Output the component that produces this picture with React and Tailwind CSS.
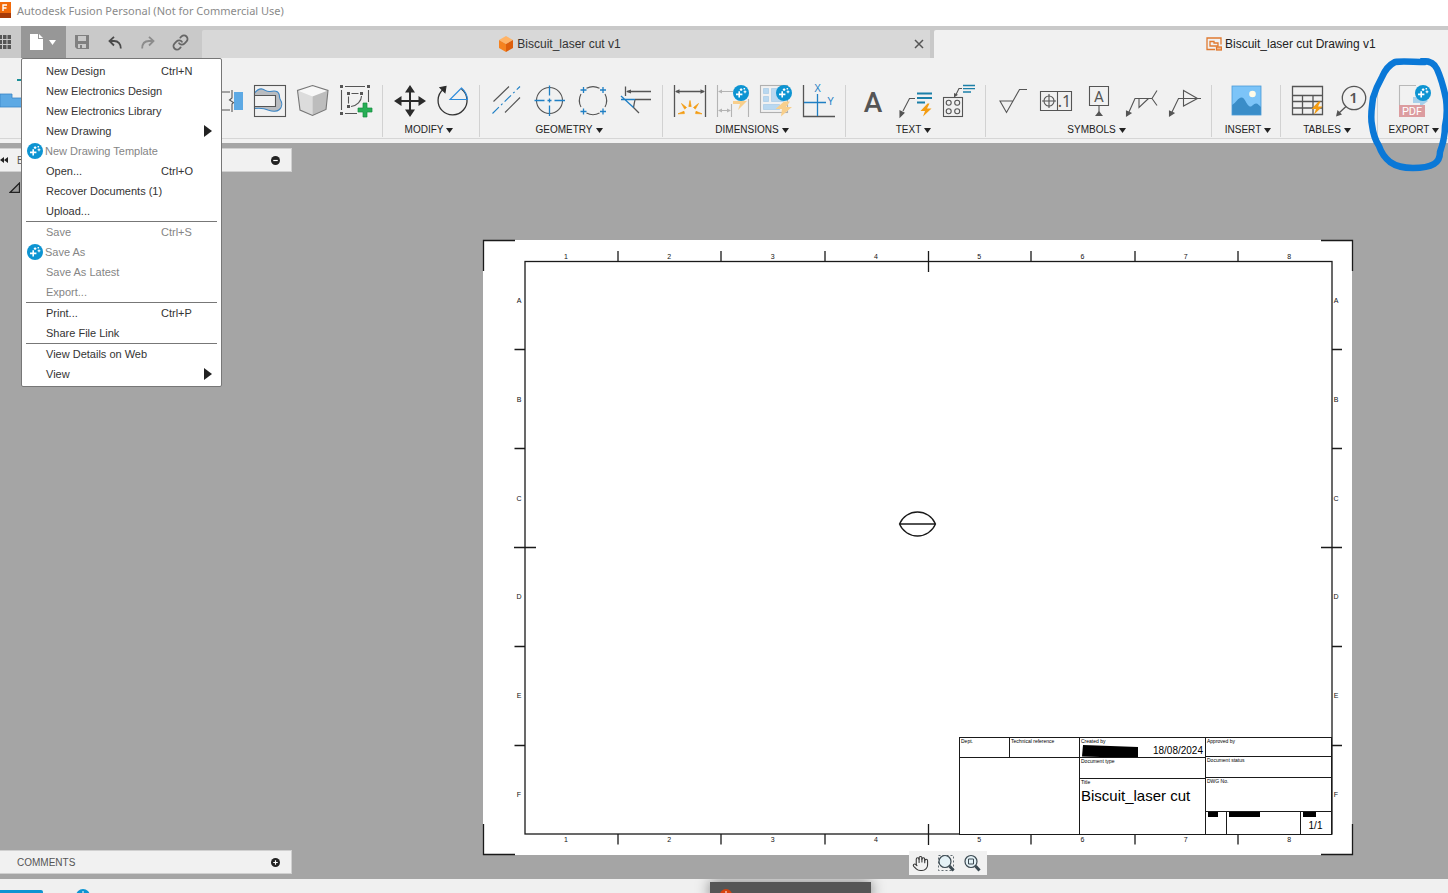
import React from 'react';
import { Hand, Link as LinkIcon } from 'lucide-react';

const INK = '#555';
const BLUE = '#1f7fc4';

function Icon({ children, className = 'size-8' }) {
  return (
    <svg viewBox="0 0 32 32" className={`block shrink-0 overflow-visible ${className}`} fill="none" stroke={INK} strokeWidth="1.1" aria-hidden="true">
      {children}
    </svg>
  );
}

function Badge({ x, y }) {
  return (
    <g transform={`translate(${x} ${y})`} stroke="#fff">
      <circle r="8" fill="#0d94d2" stroke="none" />
      <path d="M-1.8 -1.8v6.4M-5 1.4h6.4" strokeWidth="1.6" />
      <path d="M-1.2 -3.4h2.600M.1 -4.700v2.600M2.600 -1.200h2.800M4 -2.600v2.800M2.500 -4.200h1.600M3.300 -5v1.600" strokeWidth="1.1" />
    </g>
  );
}

function Bolt({ x, y, pale }) {
  return (
    <path
      transform={`translate(${x} ${y})`}
      d="M1.5 -6.5L-5.5 1h4.5L-3 6.5L5.5 -1.6H1L3.5 -6.5Z"
      fill={pale ? '#f8cf8c' : '#f39c12'}
      stroke="none"
    />
  );
}

const icons = {
  breakView: (
    <Icon>
      <path d="M0 7h19M0 25h19" />
      <rect x="23" y="7" width="9" height="18" fill="#5da9e4" stroke="none" />
      <path d="M21 5v8l-2.5 2l4 2.5l-1.5 1.5v8M4 14l5 2l-5 2" />
    </Icon>
  ),
  crop: (
    <Icon>
      <path d="M.5 8C3 5 6 3 9 4.200C12 5.500 13 7 16 6.500C20 5.500 24 6 25 9C26 12 25 13 26.500 15C28.500 18 28 22 25.500 24.500C22 27.500 18 26.500 14 25C10 23 6 23 .5 23.500Z" fill="#b9bcc0" stroke="#3b86c6" />
      <path d="M.5 10.500H21.500V21.500H.5" fill="#f3f3f3" />
      <rect x=".5" y=".5" width="31" height="31" />
    </Icon>
  ),
  cube: (
    <Icon>
      <path d="M15.500 .5L31 5.500L15.500 11.500L.5 5.500Z" fill="#f7f7f7" stroke="none" />
      <path d="M.5 5.500L15.500 11.500V30.500L3 25Z" fill="#dcdcdc" stroke="none" />
      <path d="M31 5.500L15.500 11.500V30.500L29 24.500Z" fill="#bdbdbd" stroke="none" />
      <path d="M15.500 .5L31 5.500L29 24.500L15.500 30.500L3 25L.5 5.500Z" stroke="#777" />
    </Icon>
  ),
  sketch: (
    <Icon>
      <path d="M5 1.500H25M28.500 5V17M1.500 5V25M5 28.500H17" />
      <path d="M11.500 8.500H18.500M8.500 11.500V18.500" />
      <path d="M21.500 11C21.500 16 17 21 11 21.500" />
      <path d="M0 0h3v3h-3zM27 0h3v3h-3zM0 27h3v3h-3zM7 7h3v3h-3zM20 7h3v3h-3zM7 20h3v3h-3z" fill={INK} stroke="none" />
      <path d="M23 18h4v5h5v4h-5v5h-4v-5h-5v-4h5z" fill="#27ae55" stroke="#168c40" strokeWidth=".7" />
    </Icon>
  ),
  move: (
    <Icon>
      <path d="M16 4v24M4 16h24" stroke="#2b2b2b" strokeWidth="2" />
      <path d="M16 0l5 7.500H11zM16 32l5 -7.500H11zM0 16l7.500 -5v10zM32 16l-7.500 -5v10z" fill="#2b2b2b" stroke="none" />
    </Icon>
  ),
  rotate: (
    <Icon>
      <path d="M6 4.500A14.500 14.500 0 1 0 24.500 4" stroke="#333" strokeWidth="1.300" />
      <path d="M9 1.500L8 7.500L3 2.500Z" fill="#2b2b2b" stroke="#2b2b2b" />
      <path d="M24.500 3L13 14.500H30.500C30 10 28 6 24.500 3Z" stroke="#2d8bdb" />
    </Icon>
  ),
  centerline: (
    <Icon>
      <path d="M2.500 16.500L18 1.500M14 27.500L29 12.500" />
      <path d="M1.500 28.500L29 1.500" stroke={BLUE} strokeDasharray="9 3 2 3" />
    </Icon>
  ),
  centerMark: (
    <Icon>
      <circle cx="15.500" cy="15.500" r="13" />
      <path d="M.5 15.500h10M20.500 15.500h10.500M15.500 .5v10M15.500 20.500v10.500M13.500 15.500h4M15.500 13.500v4" stroke={BLUE} strokeWidth="1.300" />
    </Icon>
  ),
  markPattern: (
    <Icon>
      <path d="M9.500 3.300A14 14 0 0 1 22.500 3.300M28 9A14 14 0 0 1 28 22M22.500 28A14 14 0 0 1 9.500 28M4 22A14 14 0 0 1 4 9" />
      <path d="M3.500 5h6M6.500 2v6M23 5h6M26 2v6M3.500 26.500h6M6.500 23.500v6M23 26.500h6M26 23.500v6" stroke={BLUE} strokeWidth="1.300" />
    </Icon>
  ),
  edgeExtension: (
    <Icon>
      <path d="M5.500 1.500v9.500M7 6.500h24M15 14.500h16M15 14.500l-1.500 8l5.500 5.500" strokeWidth="1.300" />
      <path d="M6 6.500l5 -2v4z" fill={INK} stroke="none" />
      <path d="M1 14.500h14M1 11l12.500 11.500" stroke={BLUE} strokeWidth="1.300" />
    </Icon>
  ),
  dimension: (
    <Icon>
      <path d="M.5 0v32M31.500 0v32M2 6.500h28" strokeWidth="1.300" />
      <path d="M1 6.500l4.500 -2.200v4.400zM31 6.500l-4.500 -2.200v4.400z" fill={INK} stroke="none" />
      <path d="M16 15.500l1.200 6h-2.400zM7.500 18.500l5 4l-1.800 1.600zM24.500 18.500l-5 4l1.800 1.600zM4 28.800l6 -2.500l.4 2.300zM28 28.800l-6 -2.500l-.4 2.300z" fill="#f39c12" stroke="#f39c12" strokeWidth=".7" />
    </Icon>
  ),
  autoDimension: (
    <Icon>
      <g stroke="#b4b4b4">
        <path d="M.5 0v32M14.500 19v13M31.500 14v18M2 6.500h14M2 25.500h11" />
        <path d="M1 6.500l4 -2v4zM1 25.500l4 -2v4zM14 25.500l-4 -2v4z" fill="#b4b4b4" stroke="none" />
      </g>
      <path d="M16 16h14L21 25l2 -6H16z" fill="#f8cf8c" stroke="none" />
      <Badge x={24} y={8} />
    </Icon>
  ),
  autoLayout: (
    <Icon>
      <rect x=".5" y=".5" width="27" height="27" stroke="#b0b0b0" />
      <path d="M3.500 3.500h5v5h-5zM3.500 11.500h5v5h-5zM11.500 3.500h12v13h-12zM3.500 19.500h16v5h-16z" fill="#b9d8f0" stroke="#9fc6e4" strokeWidth=".6" />
      <path d="M24 16.500L15.500 24h6.500L21 31.500L32 22h-6l4 -5.500z" fill="#f8cf8c" stroke="none" />
      <Badge x={24} y={8} />
    </Icon>
  ),
  ordinate: (
    <Icon>
      <path d="M.5 0v31.500H32" strokeWidth="1.300" />
      <path d="M14.500 9v22M1 17.500h22" stroke={BLUE} strokeWidth="1.300" />
      <text x="14.500" y="7" textAnchor="middle" className="font-['Liberation_Sans'] text-[10px]" fill={BLUE} stroke="none">X</text>
      <text x="27.500" y="20" textAnchor="middle" className="font-['Liberation_Sans'] text-[10px]" fill={BLUE} stroke="none">Y</text>
    </Icon>
  ),
  text: (
    <Icon>
      <text x="16" y="27" textAnchor="middle" className="font-['Roboto'] text-[28px] font-medium" fill={INK} stroke="none">A</text>
    </Icon>
  ),
  leaderText: (
    <Icon>
      <path d="M3 26L9.500 13.500H15" />
      <path d="M0 32V26l4 2z" fill={INK} stroke={INK} />
      <path d="M17 8.500h15M17 13h15M17 17.500h8" stroke="#1b7fa8" strokeWidth="1.800" />
      <Bolt x={26} y={25} />
    </Icon>
  ),
  holeNote: (
    <Icon>
      <rect x=".5" y="12.500" width="19" height="19" />
      <circle cx="5.700" cy="17.700" r="2.500" />
      <circle cx="14.200" cy="17.700" r="2.500" />
      <circle cx="5.700" cy="26.200" r="2.500" />
      <circle cx="14.200" cy="26.200" r="2.500" />
      <path d="M12.500 10.500L16 3.500h3" />
      <path d="M11 12.500V8l4 1.800z" fill={INK} stroke="none" />
      <path d="M20 .5h12M20 3.700h12M20 7h8" stroke="#1b7fa8" strokeWidth="1.300" />
    </Icon>
  ),
  surface: (
    <Icon>
      <path d="M15.500 16H3L9.500 27.500L22.500 4.500H30" />
    </Icon>
  ),
  tolerance: (
    <Icon>
      <path d="M.5 6.500h31v19H.5zM17.500 6.500v19M2 16h14M9 9v14" />
      <circle cx="9" cy="16" r="5" />
      <text x="24.500" y="22" textAnchor="middle" className="font-['Noto_Sans'] text-[16px]" fill={INK} stroke="none">.1</text>
    </Icon>
  ),
  datum: (
    <Icon>
      <path d="M6.500 1.500h19v19h-19zM16 20.500v8" />
      <path d="M16 26l4 5h-8z" fill={INK} stroke="none" />
      <text x="16" y="17" textAnchor="middle" className="font-['Roboto'] text-[15px]" fill={INK} stroke="none">A</text>
    </Icon>
  ),
  weld: (
    <Icon>
      <path d="M3 27L9 13.500H26L31 5.500M26 13.500L31 20.500M13 13.500V22.500L22.500 13.500" />
      <path d="M.5 31V26l4.500 2z" fill={INK} stroke={INK} />
    </Icon>
  ),
  taper: (
    <Icon>
      <path d="M3 27L9.500 13.500H32M14.500 5.500V21L28.500 13.500Z" />
      <path d="M.5 31V26l4.500 2z" fill={INK} stroke={INK} />
    </Icon>
  ),
  image: (
    <Icon>
      <rect x="2" y="1" width="29" height="29" fill="#7cc4f8" stroke="none" />
      <path d="M2 20C6 18 8 12.500 11.500 12.500C15 12.500 16 19 19 21C22 23 23 18.500 26 18.500C28 18.500 29 20.500 31 22V30H2Z" fill="#3a8dc8" stroke="none" />
      <circle cx="22.500" cy="9" r="3.300" fill="#fffbe8" stroke="none" />
      <rect x="2" y="1" width="29" height="29" stroke="#4a9bd8" strokeWidth=".8" />
    </Icon>
  ),
  table: (
    <Icon>
      <path d="M.5 1.500h30v28H.5zM.5 10.500h30M.5 16.500h30M.5 23h30M10.500 10.500v19M21 10.500v19" strokeWidth="1.300" />
      <Bolt x={25} y={23} />
    </Icon>
  ),
  balloon: (
    <Icon>
      <circle cx="19" cy="13" r="11.700" strokeWidth="1.300" />
      <path d="M11 21.500L4 28" strokeWidth="1.300" />
      <path d="M1 31.500L2.500 25l4.500 4.500z" fill={INK} stroke="none" />
      <text x="18.500" y="18" textAnchor="middle" className="font-['Noto_Sans'] text-[15px] font-semibold" fill={INK} stroke="none">1</text>
    </Icon>
  ),
  pdf: (
    <Icon>
      <path d="M3.500 20V.5H20" stroke="#b8b8b8" />
      <path d="M17 12h7v-4l8 8l-8 6v-4h-7z" fill="#a8d0ea" stroke="none" />
      <rect x="3" y="20" width="26" height="12" fill="#dc9c9f" stroke="none" />
      <text x="16" y="30" textAnchor="middle" className="font-['Roboto'] text-[11px]" fill="#fff" stroke="none">PDF</text>
      <Badge x={27} y={8} />
    </Icon>
  ),
};

const groups = [
  { label: 'MODIFY', tools: ['move', 'rotate'] },
  { label: 'GEOMETRY', tools: ['centerline', 'centerMark', 'markPattern', 'edgeExtension'] },
  { label: 'DIMENSIONS', tools: ['dimension', 'autoDimension', 'autoLayout', 'ordinate'] },
  { label: 'TEXT', tools: ['text', 'leaderText', 'holeNote'] },
  { label: 'SYMBOLS', tools: ['surface', 'tolerance', 'datum', 'weld', 'taper'] },
  { label: 'INSERT', tools: ['image'] },
  { label: 'TABLES', tools: ['table', 'balloon'] },
  { label: 'EXPORT', tools: ['pdf'], marked: true },
];

function Tool({ name }) {
  return (
    <button type="button" aria-label={name} className="flex w-[43px] shrink-0 justify-center">
      {icons[name]}
    </button>
  );
}

function Caret() {
  return (
    <svg viewBox="0 0 7 5" className="h-[5px] w-[7px]" aria-hidden="true">
      <path d="M0 0h7L3.500 5z" fill="#222" />
    </svg>
  );
}

function HandDrawnRing() {
  return (
    <svg viewBox="1367 54 86 120" className="pointer-events-none absolute -top-[30px] -left-[11px] h-[120px] w-[86px]" fill="none" stroke="#0a78d7" strokeWidth="6.500" strokeLinecap="round" strokeLinejoin="round" aria-hidden="true">
      <path d="M1423 59L1425 61C1414 61 1402 60 1395 61C1389 64 1385 69 1382 76C1378 83 1375 90 1373 97C1372 106 1370 115 1372 124C1373 132 1375 139 1379 145C1381 151 1385 157 1390 161C1397 166 1405 167 1413 167C1421 167 1429 166 1434 163C1439 160 1440 156 1440 151C1443 143 1445 133 1445 125C1447 117 1447 106 1446 98C1444 88 1441 77 1437 68C1434 61 1428 60 1423 60" />
    </svg>
  );
}

function Group({ label, tools, marked }) {
  return (
    <section className="relative flex h-[52px] min-w-[69px] shrink-0 flex-col items-center gap-[5px] border-l border-[#d2d2d2] px-[5px]">
      <div className="flex">
        {tools.map((t) => <Tool key={t} name={t} />)}
      </div>
      <button type="button" className={`flex items-center gap-[3px] whitespace-nowrap font-['Liberation_Sans',sans-serif] text-[10px] leading-4 text-[#222] ${tools.length > 1 ? 'pr-1' : 'pl-1'}`}>
        {label}
        <Caret />
      </button>
      {marked && <HandDrawnRing />}
    </section>
  );
}

const menu = [
  [
    { t: 'New Design', k: 'Ctrl+N' },
    { t: 'New Electronics Design' },
    { t: 'New Electronics Library' },
    { t: 'New Drawing', sub: true },
    { t: 'New Drawing Template', off: true, badge: true },
    { t: 'Open...', k: 'Ctrl+O' },
    { t: 'Recover Documents (1)' },
    { t: 'Upload...' },
  ],
  [
    { t: 'Save', k: 'Ctrl+S', off: true },
    { t: 'Save As', off: true, badge: true },
    { t: 'Save As Latest', off: true },
    { t: 'Export...', off: true },
  ],
  [{ t: 'Print...', k: 'Ctrl+P' }, { t: 'Share File Link' }],
  [{ t: 'View Details on Web' }, { t: 'View', sub: true }],
];

function FileMenu() {
  return (
    <div role="menu" className="absolute top-full left-0 z-30 w-[201px] rounded-xs border border-[#777] bg-white pt-[2px] pb-[2px] font-['Liberation_Sans',sans-serif] text-[11px]">
      {menu.map((section, i) => (
        <div key={i} className={i ? 'relative pt-px before:absolute before:inset-x-1 before:top-0 before:h-px before:bg-[#777]' : ''}>
          {section.map((m) => (
            <button key={m.t} type="button" role="menuitem" disabled={m.off} className={`flex h-5 w-full items-center pr-2 pl-1 text-left ${m.off ? 'text-[#858585]' : 'text-[#333]'}`}>
              <span className="flex w-[18px] shrink-0 justify-center">
                {m.badge && (
                  <svg viewBox="-8 -8 16 16" className="size-4 shrink-0" fill="none" aria-hidden="true"><Badge x={0} y={0} /></svg>
                )}
              </span>
              <span className={`grow whitespace-nowrap ${m.badge ? 'pl-px' : 'pl-[2px]'}`}>{m.t}</span>
              {m.k && <span className="w-[52px]">{m.k}</span>}
              {m.sub && (
                <svg viewBox="0 0 8 12" className="mr-px h-3 w-2" aria-hidden="true"><path d="M0 0l8 6l-8 6z" fill="#222" /></svg>
              )}
            </button>
          ))}
        </div>
      ))}
    </div>
  );
}

function TabBar() {
  return (
    <div className="relative z-20 flex h-8 items-stretch bg-[#c9c9c9]">
      <button type="button" aria-label="Show data panel" className="flex w-[21px] items-center">
        <svg viewBox="0 0 11 14" className="h-[14px] w-[11px]" fill="#555" aria-hidden="true">
          <path d="M-2 0h4v4h-4zM3 0h3.500v4H3zM7.500 0H11v4H7.500zM-2 5h4v4h-4zM3 5h3.500v4H3zM7.500 5H11v4H7.500zM-2 10h4v4h-4zM3 10h3.500v4H3zM7.500 10H11v4H7.500z" />
        </svg>
      </button>
      <div className="relative flex">
        <button type="button" aria-label="File" className="flex w-[45px] items-center gap-[6px] bg-[#979797] pl-[9px]">
          <svg viewBox="0 0 13 16" className="h-4 w-[13px]" fill="#fff" aria-hidden="true"><path d="M0 0h8v5h5v11H0zM9 0l4 4H9z" /></svg>
          <svg viewBox="0 0 7 5" className="h-[5px] w-[7px]" fill="#fff" aria-hidden="true"><path d="M0 0h7L3.500 5z" /></svg>
        </button>
        <FileMenu />
      </div>
      <div className="flex w-[136px] shrink-0 items-center">
        <button type="button" aria-label="Save" className="flex w-8 justify-center">
          <svg viewBox="0 0 14 14" className="size-[14px]" aria-hidden="true">
            <path fillRule="evenodd" d="M0 0h14v14H2L0 12zM3 1v5h8V1zM3 9v4h8V9z" fill="#808080" />
            <path d="M5 10h2v3H5z" fill="#808080" />
          </svg>
        </button>
        <button type="button" aria-label="Undo" className="flex w-[33px] justify-center">
          <svg viewBox="0 0 14 13" className="h-[13px] w-[14px]" fill="none" stroke="#4a4a4a" strokeWidth="1.800" aria-hidden="true"><path d="M6 .8L1.500 5L6 9.500M1.500 5H6C10.500 5 12.800 8 12.800 12.500" /></svg>
        </button>
        <button type="button" aria-label="Redo" className="flex w-[33px] justify-center">
          <svg viewBox="0 0 14 13" className="h-[13px] w-[14px]" fill="none" stroke="#8c8c8c" strokeWidth="1.800" aria-hidden="true"><path d="M8 .8L12.500 5L8 9.500M12.500 5H8C3.500 5 1.200 8 1.200 12.500" /></svg>
        </button>
        <button type="button" aria-label="Link" className="flex w-[33px] justify-center text-[#666]">
          <LinkIcon size={17} strokeWidth={2.5} />
        </button>
      </div>
      <div role="tablist" className="flex min-w-0 grow items-stretch pt-1 font-['Liberation_Sans',sans-serif] text-[12px] text-[#333]">
        <div className="flex w-[732px] shrink-0 items-center rounded-tl-xs border-r-4 border-[#c9c9c9] bg-[#d8d8d8] pr-[6px]">
          <button type="button" role="tab" className="flex grow items-center justify-center gap-1 pl-1">
            <svg viewBox="0 0 14 16" className="h-4 w-[14px]" aria-hidden="true">
              <path d="M7 0l7 4L7 8L0 4z" fill="#ffb366" />
              <path d="M0 4l7 4v8l-7 -4z" fill="#f5821f" />
              <path d="M14 4L7 8v8l7 -4z" fill="#dd5f0c" />
            </svg>
            Biscuit_laser cut v1
          </button>
          <button type="button" aria-label="Close tab" className="text-[#555]">
            <svg viewBox="0 0 10 10" className="size-[10px]" fill="none" stroke="currentColor" strokeWidth="1.500" aria-hidden="true"><path d="M1 1l8 8M9 1l-8 8" /></svg>
          </button>
        </div>
        <button type="button" role="tab" aria-selected="true" className="flex min-w-0 grow items-center gap-[3px] rounded-tl-xs bg-[#f1f1f1] pl-[272px] text-[#222]">
          <svg viewBox="0 0 16 14" className="h-[14px] w-4 shrink-0" fill="none" stroke="#e07a30" strokeWidth="1.300" aria-hidden="true">
            <path d="M15 7.500V1H1v11.500h8M4 4.500h4v1.500h4v3H4z" />
            <rect x="10.500" y="10" width="5" height="3" fill="#f3b98f" />
          </svg>
          <span className="whitespace-nowrap">Biscuit_laser cut Drawing v1</span>
        </button>
      </div>
    </div>
  );
}

const cols = [1, 2, 3, 4, 5, 6, 7, 8];
const rows = ['A', 'B', 'C', 'D', 'E', 'F'];
const colTicks = [135, 238, 342, 548, 652, 755];
const rowTicks = [109, 208, 406, 505];

function SheetFrame() {
  return (
    <svg viewBox="0 0 869 615" className="absolute inset-0 size-full overflow-visible" fill="none" stroke="#1a1a1a" strokeWidth="1.300" aria-hidden="true">
      <path d="M.5 31V.5H32M838 .5H869.500V31M.5 584V614.500H32M838 614.500H869.500V584" strokeWidth="1.300" />
      <rect x="42" y="21.500" width="807" height="572.500" />
      {colTicks.map((x) => <path key={x} d={`M${x} 11V21M${x} 594V604.500`} />)}
      {rowTicks.map((y) => <path key={y} d={`M31.500 ${y + 0.5}H42M849 ${y + 0.5}H859`} />)}
      <path d="M445.500 11V32M445.500 584V605M31 307.500H53M838 307.500H859" />
      <g className="font-['Liberation_Sans'] text-[7px]" fill="#111" stroke="none" textAnchor="middle">
        {cols.map((c, i) => (
          <React.Fragment key={c}>
            <text x={83 + i * 103.3} y="19">{c}</text>
            <text x={83 + i * 103.3} y="602">{c}</text>
          </React.Fragment>
        ))}
        {rows.map((r, i) => (
          <React.Fragment key={r}>
            <text x="36" y={63 + i * 98.8}>{r}</text>
            <text x="853" y={63 + i * 98.8}>{r}</text>
          </React.Fragment>
        ))}
      </g>
      <path d="M416.500 284A19.500 19.500 0 0 1 452.500 284A19.500 19.500 0 0 1 416.500 284ZM416.500 284H452.500" strokeWidth="1.300" />
    </svg>
  );
}

function Field({ label, className = '', children }) {
  return (
    <div className={`border-t border-l border-[#1a1a1a] pl-px text-[5px] leading-[6px] ${className}`}>
      <div className="whitespace-nowrap">{label}</div>
      {children}
    </div>
  );
}

function TitleBlock() {
  return (
    <div className="relative flex h-[98px] w-[373px] border-r border-b border-[#1a1a1a] bg-white text-black">
      <div className="flex w-[120px] flex-col">
        <div className="flex h-5">
          <Field label="Dept." className="w-[50px]" />
          <Field label="Technical reference" className="grow" />
        </div>
        <Field className="grow" />
      </div>
      <div className="flex w-[126px] flex-col">
        <Field label="Created by" className="h-5">
          <div className="flex items-center justify-between pr-[2px] text-[10px] leading-[14px]">
            <svg viewBox="0 0 57 14" className="h-[14px] w-[57px]" aria-label="Redacted name"><path d="M2 1L57 3V14L1 12.500Z" /></svg>
            18/08/2024
          </div>
        </Field>
        <Field label="Document type" className="h-[21px]" />
        <Field label="Title" className="grow">
          <div className="pt-[2px] text-[15px] leading-[18px] whitespace-nowrap">Biscuit_laser cut</div>
        </Field>
      </div>
      <div className="flex grow flex-col">
        <Field label="Approved by" className="h-5" />
        <Field label="Document status" className="h-[21px]" />
        <Field label="DWG No." className="h-[35px]" />
        <div className="flex grow">
          <Field className="w-[21px]"><div className="ml-px h-[5px] w-[10px] bg-black" /></Field>
          <Field className="w-[74px]"><div className="ml-px h-[5px] w-[31px] bg-black" /></Field>
          <Field className="grow">
            <div className="ml-px h-[5px] w-[13px] bg-black" />
            <div className="pt-px pr-[2px] text-center text-[10px] leading-4">1/1</div>
          </Field>
        </div>
      </div>
    </div>
  );
}

function RoundSign({ plus }) {
  return (
    <svg viewBox="0 0 10 10" className="size-[9px]" aria-hidden="true">
      <circle cx="5" cy="5" r="5" fill="#222" />
      <path d={plus ? 'M2.500 5h5M5 2.500v5' : 'M2.500 5h5'} stroke="#fff" strokeWidth="1.300" />
    </svg>
  );
}

function Magnifier({ fit }) {
  return (
    <svg viewBox="0 0 18 18" className="size-[18px]" fill="none" stroke="#3c4a52" aria-hidden="true">
      {!fit && <path d="M1.500 1.500h15v15h-15z" strokeDasharray="2 2" strokeWidth=".8" />}
      <circle cx="8" cy="7.500" r="6" fill="#e4f1f6" strokeWidth="1.200" />
      {fit && <path d="M5.500 5h5v5h-5z" />}
      <path d="M12.500 12l4 4.500" strokeWidth="3" />
    </svg>
  );
}

export default function App() {
  return (
    <div className="flex h-screen flex-col overflow-hidden bg-[#a5a5a5] font-['Liberation_Sans',sans-serif]">
      <header className="flex h-[26px] shrink-0 items-start gap-[6px] bg-white pt-[2px]">
        <svg viewBox="0 0 11 16" className="h-4 w-[11px]" aria-hidden="true">
          <rect x="-3" width="14" height="12" fill="#f26a0a" />
          <rect x="-3" y="11" width="14" height="5" fill="#a83a08" />
          <path d="M3 9V3h4M3 6h3.500" fill="none" stroke="#fff" strokeWidth="1.400" />
        </svg>
        <h1 className="font-['Noto_Sans',sans-serif] text-[11px] leading-[18px] text-[#8a8a8a]">Autodesk Fusion Personal (Not for Commercial Use)</h1>
      </header>

      <TabBar />

      <div className="relative z-10 flex h-[85px] shrink-0 items-start border-b-4 border-[#f1f1f1] bg-[#f1f1f1] pt-[27px] shadow-[inset_0_-1px_0_#d6d6d6]">
        <div className="flex w-[382px] shrink-0 items-start justify-between pr-[5px]">
          <svg viewBox="0 0 28 32" className="h-8 w-7 overflow-visible" aria-hidden="true">
            <path d="M0 9h12v4h16v9H0z" fill="#5da9e4" stroke="#3b86c6" strokeWidth=".8" />
            <path d="M17 -5h8" stroke="#1b8f98" strokeWidth="2" />
          </svg>
          <div className="flex">
            {['breakView', 'crop', 'cube', 'sketch'].map((t) => <Tool key={t} name={t} />)}
          </div>
        </div>
        {groups.map((g) => <Group key={g.label} {...g} />)}
      </div>

      <main className="relative flex min-h-0 grow items-stretch">
        <aside className="flex w-[292px] shrink-0 flex-col pt-[5px] pb-[5px]">
          <div className="flex h-6 items-center border border-l-0 border-[#d0d0d0] bg-[#f1f1f1] text-[10px] text-[#555]">
            <svg viewBox="0 0 8 6" className="h-[6px] w-2" fill="#222" aria-hidden="true"><path d="M4 0v6L0 3zM8 0v6L4 3z" /></svg>
            <span className="grow pl-[9px]">BROWSER</span>
            <button type="button" aria-label="Collapse browser" className="pr-[11px]"><RoundSign /></button>
          </div>
          <svg viewBox="0 0 11 11" className="mt-[10px] ml-[9px] size-[11px]" aria-hidden="true"><path d="M1 10.500L10.500 1v9.500z" fill="#999" stroke="#222" strokeWidth="1.300" /></svg>
          <div className="mt-auto flex h-6 items-center border border-l-0 border-[#d0d0d0] bg-[#f1f1f1] pl-[17px] text-[10px] text-[#555]">
            <span className="grow">COMMENTS</span>
            <button type="button" aria-label="Add comment" className="pr-[11px]"><RoundSign plus /></button>
          </div>
        </aside>

        <section aria-label="Drawing sheet" className="relative mt-[97px] ml-[191px] flex h-[615px] w-[869px] shrink-0 items-end justify-end bg-white pr-5 pb-5">
          <SheetFrame />
          <TitleBlock />
        </section>

        <div className="absolute bottom-1 left-[909px] flex h-6 w-[78px] items-center gap-2 bg-[#f1f1f1] pl-[3px]">
          <button type="button" aria-label="Pan" className="text-[#333]"><Hand size={17} strokeWidth={1.5} /></button>
          <button type="button" aria-label="Zoom window"><Magnifier /></button>
          <button type="button" aria-label="Fit"><Magnifier fit /></button>
        </div>
      </main>

      <footer className="relative flex h-[14px] shrink-0 items-end overflow-hidden bg-[#f0f0f0]">
        <div className="h-[3px] w-[43px] rounded-tr-xs bg-[#0d94d2]" />
        <svg viewBox="0 0 14 4" className="ml-[33px] h-1 w-[14px]" aria-hidden="true">
          <circle cx="7" cy="7" r="7" fill="#0d94d2" />
          <path d="M7 2v2" stroke="#fff" />
        </svg>
        <div className="absolute top-[3px] left-[710px] h-4 w-[161px] bg-[#555] shadow-[0_0_14px_rgba(0,0,0,0.5)]">
          <svg viewBox="0 0 12 12" className="mt-[7px] ml-[10px] size-3" aria-hidden="true">
            <circle cx="6" cy="6" r="6" fill="#d8430f" />
            <path d="M6 2v4" stroke="#fff" />
          </svg>
        </div>
      </footer>
    </div>
  );
}
